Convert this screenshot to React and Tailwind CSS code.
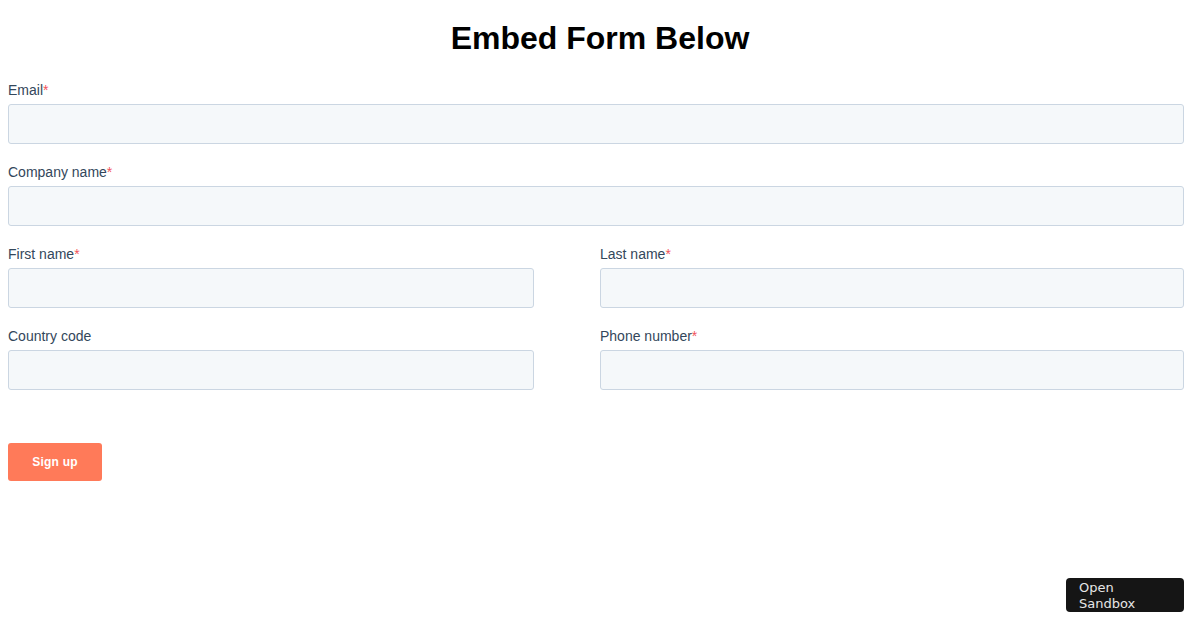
import React from 'react';

const Field = ({ label, required, className = '' }) => (
  <div className={`mb-[18px] ${className}`}>
    <label className="block h-5 mb-1 text-[14px] leading-5 text-[#33475b]">
      {label}
      {required && <span className="text-[#f2545b]">*</span>}
    </label>
    <input
      type="text"
      className="block w-full h-10 bg-[#f5f8fa] border border-[#cbd6e2] rounded-[3px] px-[15px] outline-none"
    />
  </div>
);

const App = () => {
  return (
    <div className="relative w-[1200px] h-[630px] bg-white font-['Liberation_Sans',Arial,sans-serif] overflow-hidden">
      {/* Title */}
      <h1 className="pt-5 text-center text-[32px] leading-9 font-bold text-black">Embed Form Below</h1>

      {/* Form */}
      <form className="mt-6 ml-2 mr-4">
        <Field label="Email" required />
        <Field label="Company name" required />

        <div className="flex justify-between">
          <Field label="First name" required className="w-[526px]" />
          <Field label="Last name" required className="w-[584px]" />
        </div>
        <div className="flex justify-between">
          <Field label="Country code" className="w-[526px]" />
          <Field label="Phone number" required className="w-[584px]" />
        </div>

        <button
          type="button"
          className="mt-[35px] w-[94px] h-[38px] bg-[#ff7a59] rounded-[3px] text-white text-[12px] font-bold tracking-[0.2px]"
        >
          Sign up
        </button>
      </form>

      {/* Sandbox badge */}
      <div className="absolute right-4 bottom-[18px] w-[118px] h-[34px] bg-[#151515] rounded-[4px] pl-[13px] text-[13px] leading-4 pt-[2px] text-[#e6e6e6] font-['DejaVu_Sans',sans-serif]">
        Open
        <br />
        Sandbox
      </div>
    </div>
  );
};

export default App;
